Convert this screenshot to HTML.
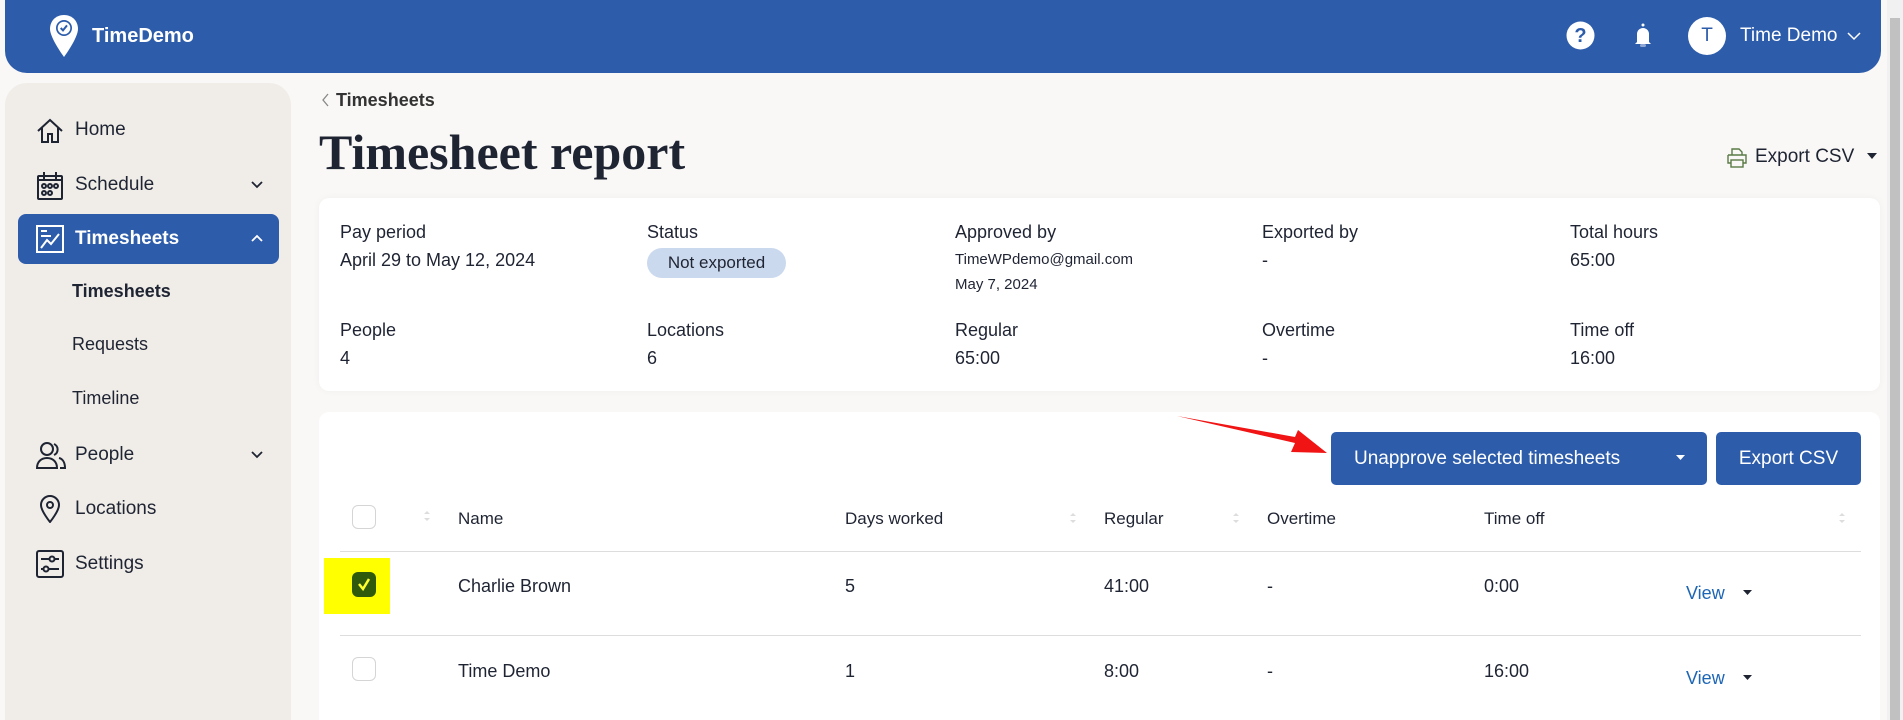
<!DOCTYPE html>
<html style="width:1903px;height:720px;overflow:hidden"><head><meta charset="utf-8"><style>
*{box-sizing:border-box;margin:0;padding:0}
body{width:1903px;height:720px;overflow:hidden;background:#f9f8f6;font-family:"Liberation Sans",sans-serif;color:#1f2433;position:relative}
.a{position:absolute;white-space:nowrap}
.hdr{left:5px;top:0;width:1876px;height:73px;background:#2d5cab;border-radius:0 0 22px 22px}
.side{left:5px;top:83px;width:286px;height:637px;background:#f0ede9;border-radius:22px 22px 0 0}
.nav{font-size:19px;color:#1f2433}
.card{background:#fff;border-radius:10px;box-shadow:0 0 8px rgba(0,0,0,.04)}
.lbl{font-size:18px}
.val{font-size:18px}
.th{font-size:17px}
.td{font-size:18px}
.cb{width:24px;height:24px;border:1.5px solid #d5d5d5;border-radius:6px;background:#fff}
.btn{background:#2d5cab;color:#fff;border-radius:5px;font-size:19px}
.sort{width:6px;height:12px}
</style></head><body>
<div class="a hdr"></div>
<svg class="a" style="left:48px;top:14px" width="32" height="44" viewBox="0 0 32 44"><path d="M16 1C7.7 1 2 7 2 15c0 9 14 28 14 28s14-19 14-28C30 7 24.3 1 16 1z" fill="#fff"/><circle cx="16" cy="14" r="8" fill="#2d5cab"/><circle cx="16" cy="14" r="6.3" fill="#fff"/><path d="M12.7 14l2.3 2.4 4-5" stroke="#2d5cab" stroke-width="2" fill="none"/></svg>
<div class="a" style="left:92px;top:25px;font-size:20px;color:#fff;font-weight:bold">TimeDemo</div>
<svg class="a" style="left:1566px;top:21px" width="29" height="29" viewBox="0 0 29 29"><circle cx="14.5" cy="14.5" r="14" fill="#fff"/><text x="14.5" y="21" text-anchor="middle" font-family="Liberation Sans" font-weight="bold" font-size="20" fill="#2d5cab">?</text></svg>
<svg class="a" style="left:1633px;top:22px" width="20" height="27" viewBox="0 0 20 27"><circle cx="10" cy="3" r="1.5" fill="#fff"/><path d="M4 20V12a6 6 0 0 1 12 0v8l2 2H2z" fill="#fff"/><rect x="7" y="22" width="6" height="3" rx="1.5" fill="#8fa8d6"/></svg>
<div class="a" style="left:1688px;top:17px;width:38px;height:38px;border-radius:50%;background:#fff;color:#2d5cab;font-size:19px;text-align:center;line-height:38px">T</div>
<div class="a" style="left:1740px;top:25px;font-size:19px;color:#fff">Time Demo</div>
<svg class="a" style="left:1847px;top:32px" width="14" height="9"><path d="M1 1l6 6 6-6" stroke="#fff" stroke-width="1.5" fill="none"/></svg>
<div class="a" style="left:1887px;top:0;width:16px;height:720px;background:#f1f1f1"></div>
<div class="a" style="left:1890px;top:18px;width:10px;height:702px;background:#c1c1c1"></div>

<div class="a side"></div>
<svg class="a" style="left:36px;top:117px" width="28" height="28" viewBox="0 0 28 28" fill="none" stroke="#1f2433" stroke-width="2"><path d="M2 14L14 3l12 11M6 11v14h6v-8h4v8h6V11"/></svg>
<div class="a nav" style="left:75px;top:119px">Home</div>
<svg class="a" style="left:36px;top:171px" width="28" height="30" viewBox="0 0 28 30" fill="none" stroke="#1f2433" stroke-width="2"><rect x="2" y="5" width="24" height="23" rx="1"/><path d="M8 1v7M20 1v7M2 9h24"/><circle cx="8" cy="15" r="2"/><circle cx="14" cy="15" r="2"/><circle cx="20" cy="15" r="2"/><circle cx="8" cy="22" r="2"/><circle cx="14" cy="22" r="2"/></svg>
<div class="a nav" style="left:75px;top:174px">Schedule</div>
<svg class="a" style="left:251px;top:181px" width="12" height="8"><path d="M1 1l5 5 5-5" stroke="#1f2433" stroke-width="1.8" fill="none"/></svg>
<div class="a" style="left:18px;top:214px;width:261px;height:50px;background:#2d5cab;border-radius:8px"></div>
<svg class="a" style="left:36px;top:225px" width="28" height="28" viewBox="0 0 28 28" fill="none" stroke="#fff" stroke-width="2"><rect x="1" y="1" width="26" height="26"/><path d="M5 6h6M5 11h10M5 23l6-8 4 4 8-10"/></svg>
<div class="a nav" style="left:75px;top:228px;color:#fff;font-weight:bold">Timesheets</div>
<svg class="a" style="left:251px;top:234px" width="12" height="8"><path d="M1 7l5-5 5 5" stroke="#fff" stroke-width="1.8" fill="none"/></svg>
<div class="a nav" style="left:72px;top:281px;font-weight:bold;font-size:18px">Timesheets</div>
<div class="a nav" style="left:72px;top:334px;font-size:18px">Requests</div>
<div class="a nav" style="left:72px;top:388px;font-size:18px">Timeline</div>
<svg class="a" style="left:36px;top:441px" width="30" height="28" viewBox="0 0 30 28" fill="none" stroke="#1f2433" stroke-width="2"><circle cx="11" cy="8" r="6"/><path d="M1 27c0-6 4-10 10-10s10 4 10 10z"/><path d="M18 3a6 6 0 0 1 0 11M23 17c4 1 6 5 6 10h-5"/></svg>
<div class="a nav" style="left:75px;top:444px">People</div>
<svg class="a" style="left:251px;top:451px" width="12" height="8"><path d="M1 1l5 5 5-5" stroke="#1f2433" stroke-width="1.8" fill="none"/></svg>
<svg class="a" style="left:39px;top:495px" width="22" height="28" viewBox="0 0 22 28" fill="none" stroke="#1f2433" stroke-width="2"><path d="M11 27S2 16 2 10a9 9 0 0 1 18 0c0 6-9 17-9 17z"/><circle cx="11" cy="10" r="3"/></svg>
<div class="a nav" style="left:75px;top:498px">Locations</div>
<svg class="a" style="left:36px;top:550px" width="28" height="28" viewBox="0 0 28 28" fill="none" stroke="#1f2433" stroke-width="2"><rect x="1" y="1" width="26" height="26" rx="2"/><path d="M5 9h18M5 19h18"/><circle cx="16" cy="9" r="2.5" fill="#f0ede9"/><circle cx="10" cy="19" r="2.5" fill="#f0ede9"/></svg>
<div class="a nav" style="left:75px;top:553px">Settings</div>

<svg class="a" style="left:322px;top:93px" width="8" height="14"><path d="M6 1L1 7l5 6" stroke="#888" stroke-width="1.3" fill="none"/></svg>
<div class="a" style="left:336px;top:90px;font-size:18px;font-weight:bold;color:#333">Timesheets</div>
<div class="a" style="left:319px;top:123px;font-family:'Liberation Serif',serif;font-size:50px;font-weight:bold;color:#1f2433">Timesheet report</div>
<svg class="a" style="left:1727px;top:148px" width="20" height="20" viewBox="0 0 20 20" fill="none" stroke="#5a7a45" stroke-width="1.4"><path d="M5 7V1h7l3 3v3M1 7h18v8h-3M4 15H1V7"/><rect x="4" y="12" width="12" height="7"/></svg>
<div class="a" style="left:1755px;top:146px;font-size:19px">Export CSV</div>
<svg class="a" style="left:1867px;top:153px" width="10" height="6"><path d="M0 0h10L5 6z" fill="#1f2433"/></svg>

<div class="a card" style="left:319px;top:198px;width:1561px;height:193px"></div>
<div class="a lbl" style="left:340px;top:222px">Pay period</div><div class="a val" style="left:340px;top:250px">April 29 to May 12, 2024</div>
<div class="a lbl" style="left:647px;top:222px">Status</div>
<div class="a" style="left:647px;top:248px;width:139px;height:30px;border-radius:15px;background:#cbd9ee;font-size:17px;line-height:30px;text-align:center">Not exported</div>
<div class="a lbl" style="left:955px;top:222px">Approved by</div>
<div class="a" style="left:955px;top:251px;font-size:15px">TimeWPdemo@gmail.com</div>
<div class="a" style="left:955px;top:276px;font-size:15px">May 7, 2024</div>
<div class="a lbl" style="left:1262px;top:222px">Exported by</div><div class="a val" style="left:1262px;top:250px">-</div>
<div class="a lbl" style="left:1570px;top:222px">Total hours</div><div class="a val" style="left:1570px;top:250px">65:00</div>
<div class="a lbl" style="left:340px;top:320px">People</div><div class="a val" style="left:340px;top:348px">4</div>
<div class="a lbl" style="left:647px;top:320px">Locations</div><div class="a val" style="left:647px;top:348px">6</div>
<div class="a lbl" style="left:955px;top:320px">Regular</div><div class="a val" style="left:955px;top:348px">65:00</div>
<div class="a lbl" style="left:1262px;top:320px">Overtime</div><div class="a val" style="left:1262px;top:348px">-</div>
<div class="a lbl" style="left:1570px;top:320px">Time off</div><div class="a val" style="left:1570px;top:348px">16:00</div>

<div class="a" style="left:319px;top:412px;width:1561px;height:308px;background:#fff;border-radius:10px 10px 0 0"></div>
<div class="a btn" style="left:1331px;top:432px;width:376px;height:53px;line-height:53px;padding-left:23px">Unapprove selected timesheets</div>
<svg class="a" style="left:1676px;top:455px" width="9" height="5"><path d="M0 0h9L4.5 5z" fill="#fff"/></svg>
<div class="a btn" style="left:1716px;top:432px;width:145px;height:53px;line-height:53px;text-align:center">Export CSV</div>
<svg class="a" style="left:1170px;top:410px" width="165" height="50"><path d="M7 6L125 33l-4 9 36 1-29-23-3 7z" fill="#f01414"/></svg>

<div class="a cb" style="left:352px;top:505px"></div>
<svg class="a sort" style="left:424px;top:510px" viewBox="0 0 6 12"><path d="M0 4l3-3 3 3zM0 8l3 3 3-3z" fill="#ddd"/></svg>
<div class="a th" style="left:458px;top:509px">Name</div>
<div class="a th" style="left:845px;top:509px">Days worked</div>
<svg class="a sort" style="left:1070px;top:512px" viewBox="0 0 6 12"><path d="M0 4l3-3 3 3zM0 8l3 3 3-3z" fill="#ddd"/></svg>
<div class="a th" style="left:1104px;top:509px">Regular</div>
<svg class="a sort" style="left:1233px;top:512px" viewBox="0 0 6 12"><path d="M0 4l3-3 3 3zM0 8l3 3 3-3z" fill="#ddd"/></svg>
<div class="a th" style="left:1267px;top:509px">Overtime</div>
<div class="a th" style="left:1484px;top:509px">Time off</div>
<svg class="a sort" style="left:1839px;top:512px" viewBox="0 0 6 12"><path d="M0 4l3-3 3 3zM0 8l3 3 3-3z" fill="#ddd"/></svg>
<div class="a" style="left:340px;top:551px;width:1521px;height:1px;background:#ddd"></div>
<div class="a" style="left:324px;top:558px;width:66px;height:56px;background:#ffff00"></div>
<div class="a" style="left:352px;top:572px;width:24px;height:25px;border-radius:6px;background:#2f5a0c"></div>
<svg class="a" style="left:357px;top:577px" width="14" height="15"><path d="M2 7l4 5 6-10" stroke="#ffff30" stroke-width="2.5" fill="none"/></svg>
<div class="a td" style="left:458px;top:576px">Charlie Brown</div>
<div class="a td" style="left:845px;top:576px">5</div>
<div class="a td" style="left:1104px;top:576px">41:00</div>
<div class="a td" style="left:1267px;top:576px">-</div>
<div class="a td" style="left:1484px;top:576px">0:00</div>
<div class="a td" style="left:1686px;top:583px;color:#1d65b5">View</div>
<svg class="a" style="left:1743px;top:590px" width="9" height="5"><path d="M0 0h9L4.5 5z" fill="#1f2433"/></svg>
<div class="a" style="left:340px;top:635px;width:1521px;height:1px;background:#ddd"></div>
<div class="a cb" style="left:352px;top:657px"></div>
<div class="a td" style="left:458px;top:661px">Time Demo</div>
<div class="a td" style="left:845px;top:661px">1</div>
<div class="a td" style="left:1104px;top:661px">8:00</div>
<div class="a td" style="left:1267px;top:661px">-</div>
<div class="a td" style="left:1484px;top:661px">16:00</div>
<div class="a td" style="left:1686px;top:668px;color:#1d65b5">View</div>
<svg class="a" style="left:1743px;top:675px" width="9" height="5"><path d="M0 0h9L4.5 5z" fill="#1f2433"/></svg>
</body></html>
